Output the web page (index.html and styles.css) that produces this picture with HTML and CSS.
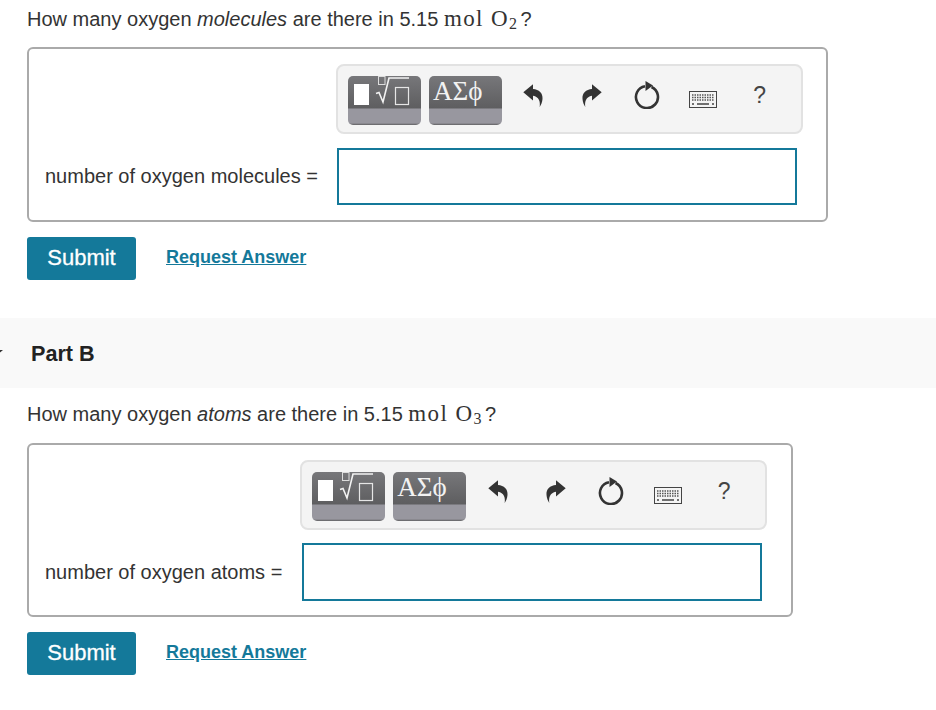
FILE: index.html
```html
<!DOCTYPE html>
<html lang="en">
<head>
  <meta charset="UTF-8">
  <title>Part B</title>
  <link rel="stylesheet" href="styles.css">
</head>
<body>
<svg class="defs" width="0" height="0">
  <defs>
    <symbol id="icon-templates" viewBox="0 0 73 34">
      <rect x="6" y="8" width="15" height="21" fill="#fff"/>
      <rect x="30.5" y="0.5" width="6.5" height="8" fill="none" stroke="#ddd" stroke-width="1"/>
      <path d="M28 17.5 L31 16.5 L35 26 L41 2 H61" fill="none" stroke="#f2f2f2" stroke-width="1.6"/>
      <rect x="47.5" y="11.5" width="13" height="17" fill="none" stroke="#e6e6e6" stroke-width="1.2"/>
    </symbol>
    <symbol id="icon-undo" viewBox="0 0 22 24">
      <path d="M0.3 8.3 L10 0.3 V5 C16 5.5 20 9 19.5 15 C19.3 18 18 21 16.7 23 C17.5 17 16 13 10 11.7 V16.5 Z" fill="#333"/>
    </symbol>
    <symbol id="icon-reset" viewBox="0 0 28 30">
      <path d="M18.5 8 A11 11 0 1 1 12 7.2" fill="none" stroke="#333" stroke-width="2.6"/>
      <path d="M12.5 2 L20 6.5 L12.5 12 Z" fill="#333"/>
    </symbol>
    <symbol id="icon-keyboard" viewBox="0 0 28 17">
      <rect x="0.5" y="0.5" width="27" height="16" fill="#f4f4f4" stroke="#444"/>
      <path d="M3 4 H25 M3 6.5 H25 M3 9 H25" stroke="#555" stroke-width="1.4" stroke-dasharray="1.5 1"/>
      <path d="M3 13 H5 M8 13 H20 M23 13 H25" stroke="#444" stroke-width="1.6"/>
    </symbol>
  </defs>
</svg>

<main class="part">
  <p class="question">How many oxygen <em>molecules</em> are there in 5.15 <span class="math">mol O<sub>2</sub></span>?</p>
  <div class="answer-box">
    <label class="answer-label" for="molecules">number of oxygen molecules =</label>
    <div class="answer-col">
      <div class="toolbar">
        <button class="tool-btn"><svg class="tool-svg"><use href="#icon-templates"/></svg></button>
        <button class="tool-btn tool-greek">ΑΣϕ</button>
        <div class="tool-slots">
          <span class="slot"><svg class="icon-arrow"><use href="#icon-undo"/></svg></span>
          <span class="slot"><svg class="icon-arrow flip"><use href="#icon-undo"/></svg></span>
          <span class="slot"><svg class="icon-reset"><use href="#icon-reset"/></svg></span>
          <span class="slot"><svg class="icon-keyboard"><use href="#icon-keyboard"/></svg></span>
          <span class="slot help">?</span>
        </div>
      </div>
      <input class="answer-input" id="molecules" type="text">
    </div>
  </div>
  <div class="actions">
    <button class="submit-button">Submit</button>
    <a class="request-link" href="#">Request Answer</a>
  </div>
</main>

<h2 class="part-header"><span class="caret"></span>Part B</h2>

<section class="part part-b">
  <p class="question">How many oxygen <em>atoms</em> are there in 5.15 <span class="math">mol O<sub>3</sub></span>?</p>
  <div class="answer-box">
    <label class="answer-label" for="atoms">number of oxygen atoms =</label>
    <div class="answer-col">
      <div class="toolbar">
        <button class="tool-btn"><svg class="tool-svg"><use href="#icon-templates"/></svg></button>
        <button class="tool-btn tool-greek">ΑΣϕ</button>
        <div class="tool-slots">
          <span class="slot"><svg class="icon-arrow"><use href="#icon-undo"/></svg></span>
          <span class="slot"><svg class="icon-arrow flip"><use href="#icon-undo"/></svg></span>
          <span class="slot"><svg class="icon-reset"><use href="#icon-reset"/></svg></span>
          <span class="slot"><svg class="icon-keyboard"><use href="#icon-keyboard"/></svg></span>
          <span class="slot help">?</span>
        </div>
      </div>
      <input class="answer-input" id="atoms" type="text">
    </div>
  </div>
  <div class="actions">
    <button class="submit-button">Submit</button>
    <a class="request-link" href="#">Request Answer</a>
  </div>
</section>
</body>
</html>
```

FILE: styles.css
```css
body {
  margin: 0;
  font-family: "Liberation Sans", Arial, sans-serif;
  font-size: 20px;
  color: #333;
  background: #fff;
}
.defs {
  position: absolute;
}
.part {
  padding: 0 0 0 27px;
}
.question {
  margin: 0;
  height: 47px;
  padding-top: 7px;
  box-sizing: border-box;
  line-height: 24px;
}
.math {
  font-family: "Liberation Serif", serif;
  font-size: 23px;
  letter-spacing: 1.4px;
}
.math sub {
  margin-right: 2px;
  font-size: 16px;
  line-height: 0;
  vertical-align: -3px;
}
.answer-box {
  display: inline-flex;
  align-items: flex-end;
  gap: 19px;
  padding: 15px 29px 15px 16px;
  border: 2px solid #aaa;
  border-radius: 6px;
  vertical-align: top;
}
.answer-label {
  line-height: 57px;
  white-space: nowrap;
}
.answer-col {
  display: flex;
  flex-direction: column;
  gap: 14px;
}
.toolbar {
  display: flex;
  align-items: flex-start;
  gap: 8px;
  width: 467px;
  height: 70px;
  margin: 0 -6px 0 -1px;
  padding: 10px 13px 10px 10px;
  box-sizing: border-box;
  border: 2px solid #e2e2e2;
  border-radius: 8px;
  background: #f4f4f4;
}
.tool-btn {
  flex: none;
  width: 73px;
  height: 49px;
  padding: 0;
  border: none;
  border-radius: 5px;
  color: #f2f2f2;
  background: linear-gradient(#77777a 0, #5e5e60 32px, #98979f 33px, #98979f 47px, #5f5f61 49px);
}
.tool-svg {
  display: block;
  width: 73px;
  height: 34px;
  margin-bottom: 15px;
}
.tool-greek {
  display: block;
  padding: 0 0 19px 4px;
  text-align: left;
  font-family: "Liberation Serif", serif;
  font-size: 27px;
  line-height: 30px;
}
.tool-slots {
  display: flex;
  flex: 1;
  align-items: center;
  height: 40px;
  margin-left: -4px;
}
.slot {
  flex: 1;
  display: flex;
  justify-content: center;
  align-items: center;
}
.icon-arrow {
  width: 22px;
  height: 24px;
}
.flip {
  transform: scaleX(-1);
}
.icon-reset {
  width: 28px;
  height: 30px;
  margin-bottom: 4px;
}
.icon-keyboard {
  width: 28px;
  height: 17px;
  margin-top: 6px;
}
.help {
  margin-bottom: 2px;
  font-size: 23px;
  color: #444;
}
.answer-input {
  display: block;
  width: 460px;
  height: 57px;
  box-sizing: border-box;
  margin: 0;
  border: 2px solid #14799a;
  background: #fff;
}
.actions {
  display: flex;
  align-items: center;
  gap: 30px;
  margin-top: 15px;
}
.submit-button {
  width: 109px;
  height: 43px;
  padding: 0 0 2px;
  border: none;
  border-radius: 3px;
  color: #fff;
  font-family: inherit;
  font-size: 22px;
  -webkit-text-stroke: .3px #fff;
  background: #14799a;
}
.request-link {
  margin-bottom: 2px;
  color: #14799a;
  font-weight: bold;
  font-size: 18px;
}
.part-header {
  display: flex;
  align-items: center;
  height: 70px;
  margin: 38px 0 0;
  padding: 2px 0 0 31px;
  box-sizing: border-box;
  position: relative;
  font-size: 21.6px;
  color: #222;
  background: #f9f9f9;
}
.caret {
  position: absolute;
  left: -9px;
  top: 32px;
  border-style: solid;
  border-width: 5px 6px 0;
  border-color: #333 transparent transparent;
}
.part-b {
  padding-top: 7px;
}
.part-b .question {
  height: 48px;
}
.part-b .answer-box {
  gap: 20px;
  padding-bottom: 14px;
}
.part-b .answer-col {
  gap: 13px;
}
.part-b .toolbar {
  margin: 0 -5px 0 -2px;
}
.part-b .answer-input {
  height: 58px;
}
```
